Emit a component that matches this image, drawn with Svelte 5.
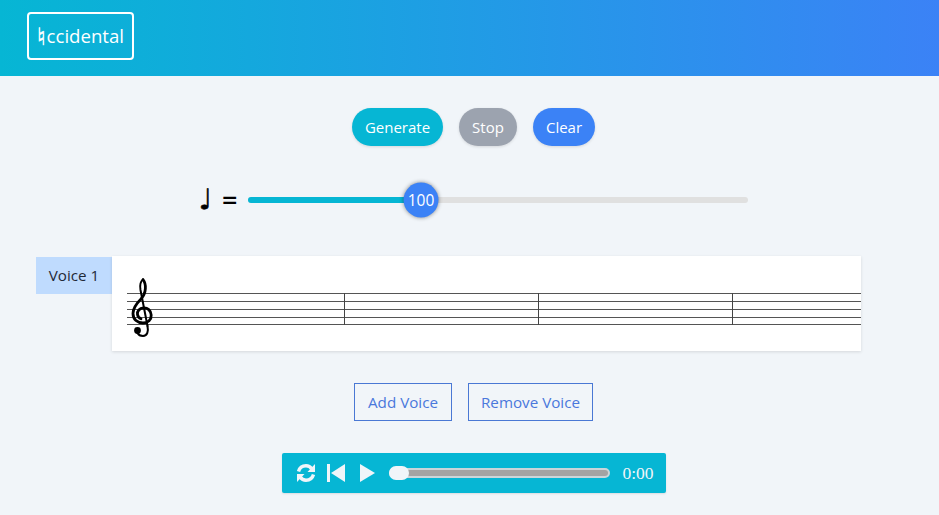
<script>
	let tempo = $state(100);
	let voices = $state(['Voice 1']);
	const bars = [232.5, 426.5, 620.5];
	const lines = [37.5, 45.5, 53.5, 61.5, 68.5];
</script>

<header class="top">
	<div class="logo"><span class="natural">♮</span>ccidental</div>
</header>

<main>
	<div class="actions">
		<button class="pill teal">Generate</button>
		<button class="pill gray">Stop</button>
		<button class="pill blue">Clear</button>
	</div>

	<div class="tempo">
		<span class="note">♩</span>
		<span class="equals">=</span>
		<div class="slider">
			<div class="fill" style="width: {(tempo / 289) * 100}%"></div>
			<div class="thumb" style="left: {(tempo / 289) * 100}%">{tempo}</div>
		</div>
	</div>

	{#each voices as voice}
		<section class="voice">
			<div class="voice-label">{voice}</div>
			<div class="score">
				<svg width="749" height="95" viewBox="0 0 749 95">
					{#each lines as y}
						<line x1="15" x2="749" y1={y} y2={y} stroke="#555" stroke-width="1" />
					{/each}
					{#each bars as x}
						<line x1={x} x2={x} y1="37" y2="69" stroke="#444" stroke-width="1" />
					{/each}
					<g fill="none" stroke="#000" stroke-linecap="round">
						<path stroke-width="2" d="M35.5 70 L28.5 34 C27.5 28 29 25 31 23.5" />
						<path stroke-width="2.8" d="M31 23.5 C34.5 28 34.5 37 29 43 C24 48 21 52 21 57.5 C21 63.5 25.5 67 31 67 C36 67 39.5 63.5 39.2 59 C39 54.5 35.5 51.5 31.5 51.8 C27.5 52.2 25 55 25.5 58.5 C25.8 60.5 27 62 29 62.8" />
						<path stroke-width="2" d="M35.5 70 C36.5 75 35.5 80 31 80 C28.5 80 26.5 79 25.5 77" />
					</g>
					<circle cx="25.5" cy="74.5" r="3.4" fill="#000" />
				</svg>
			</div>
		</section>
	{/each}

	<div class="voice-actions">
		<button class="outline add">Add Voice</button>
		<button class="outline remove">Remove Voice</button>
	</div>

	<div class="player">
		<svg class="icon loop" width="20" height="20" viewBox="0 0 20 20">
			<path fill="none" stroke="#f1f5f9" stroke-width="3.4" d="M2.5 8.5 C3.5 5 6.5 2.8 10 2.8 C12.5 2.8 14.5 4 15.8 6" />
			<path fill="#f1f5f9" d="M19 1 V9 H11.5 Z" />
			<path fill="none" stroke="#f1f5f9" stroke-width="3.4" d="M17.5 11.5 C16.5 15 13.5 17.2 10 17.2 C7.5 17.2 5.5 16 4.2 14" />
			<path fill="#f1f5f9" d="M1 19 V11 H8.5 Z" />
		</svg>
		<svg class="icon prev" width="20" height="20" viewBox="0 0 20 20">
			<rect x="1" y="1" width="3" height="18" fill="#f1f5f9" />
			<path fill="#f1f5f9" d="M19 1 V19 L5 10 Z" />
		</svg>
		<svg class="icon play" width="16" height="20" viewBox="0 0 16 20">
			<path fill="#f1f5f9" d="M1 1 L16 10 L1 19 Z" />
		</svg>
		<div class="progress"><div class="knob"></div></div>
		<span class="time">0:00</span>
	</div>
</main>

<style>
	:global(body) {
		background: #f1f5f9;
	}
	main, .top, button {
		font-family: "Open Sans", "Noto Sans", sans-serif;
	}
	.top {
		height: 76px;
		box-sizing: border-box;
		padding: 12px 27px;
		background: linear-gradient(90deg, #06b6d4, #3b82f6);
	}
	.logo {
		width: 107px;
		height: 48px;
		box-sizing: border-box;
		border: 2px solid #fff;
		border-radius: 4px;
		color: #fff;
		font-size: 18.6px;
		line-height: 44px;
		text-align: center;
		white-space: nowrap;
		overflow: hidden;
	}
	.natural {
		font-family: "DejaVu Sans", sans-serif;
		font-size: 24px;
		line-height: 0;
		margin-right: 1px;
		vertical-align: -2px;
		-webkit-text-stroke: 0.5px #fff;
	}
	main {
		display: flex;
		flex-direction: column;
		height: 439px;
		box-sizing: border-box;
		padding: 32px 0 0 8px;
	}
	.actions {
		display: flex;
		justify-content: center;
		gap: 16px;
	}
	.pill {
		height: 38px;
		border: none;
		border-radius: 19px;
		padding: 0;
		color: #fff;
		font-size: 15px;
		box-shadow: 0 1px 3px rgba(0, 0, 0, 0.12);
	}
	.teal { width: 91px; background: #06b6d4; }
	.gray { width: 58px; background: #9ca3af; }
	.blue { width: 62px; background: #3b82f6; }

	.tempo {
		display: flex;
		align-items: center;
		height: 36px;
		margin-top: 36px;
		padding-left: 191px;
	}
	.note {
		width: 23px;
		font-family: "DejaVu Sans", sans-serif;
		font-size: 28px;
		-webkit-text-stroke: 0.6px #000;
		line-height: 36px;
		color: #000;
	}
	.equals {
		width: 26px;
		font-size: 27px;
		font-weight: 600;
		line-height: 36px;
		color: #000;
	}
	.slider {
		position: relative;
		width: 500px;
		height: 6px;
		border-radius: 3px;
		background: #e0e0e0;
	}
	.fill {
		height: 100%;
		border-radius: 3px;
		background: #06b6d4;
	}
	.thumb {
		position: absolute;
		top: 50%;
		width: 35px;
		height: 35px;
		transform: translate(-50%, -50%);
		border-radius: 50%;
		background: #3b82f6;
		box-shadow: 0 0 4px rgba(0, 0, 0, 0.45);
		color: #fff;
		font-size: 15.5px;
		line-height: 34px;
		text-align: center;
	}

	.voice {
		display: flex;
		align-items: flex-start;
		margin-top: 38px;
		padding-left: 28px;
	}
	.voice-label {
		width: 76px;
		height: 37px;
		margin-top: 1px;
		background: #bfdbfe;
		color: #1f2937;
		font-size: 15.2px;
		line-height: 37px;
		text-align: center;
	}
	.score {
		width: 749px;
		height: 95px;
		background: #fff;
		box-shadow: 0 1px 3px rgba(0, 0, 0, 0.12);
	}
	.score svg {
		display: block;
	}

	.voice-actions {
		display: flex;
		justify-content: center;
		gap: 16px;
		margin-top: 32px;
	}
	.outline {
		height: 38px;
		padding: 0;
		border: 1px solid #4a78d4;
		border-radius: 0;
		background: transparent;
		color: #4a78dc;
		font-size: 15.2px;
	}
	.add { width: 98px; }
	.remove { width: 125px; }

	.player {
		display: flex;
		align-items: center;
		align-self: center;
		width: 384px;
		height: 40px;
		box-sizing: border-box;
		margin-top: 32px;
		padding: 0 12px 0 14px;
		border-radius: 2px;
		background: #06b6d4;
		box-shadow: 0 1px 2px rgba(0, 0, 0, 0.1);
	}
	.icon {
		flex: none;
		margin-right: 10px;
	}
	.prev {
		margin-right: 11px;
	}
	.play {
		margin-left: 2px;
		margin-right: 14px;
	}
	.progress {
		position: relative;
		flex: 1;
		height: 6px;
		border: 2px solid #cbd5d9;
		border-radius: 5px;
		background: #a3a3a3;
	}
	.knob {
		position: absolute;
		top: -4px;
		left: -2px;
		width: 20px;
		height: 14px;
		border-radius: 7px;
		background: #f1f5f9;
	}
	.time {
		margin-left: 12px;
		color: #f1f5f9;
		font-family: "Liberation Serif", serif;
		font-size: 17.5px;
	}
</style>
